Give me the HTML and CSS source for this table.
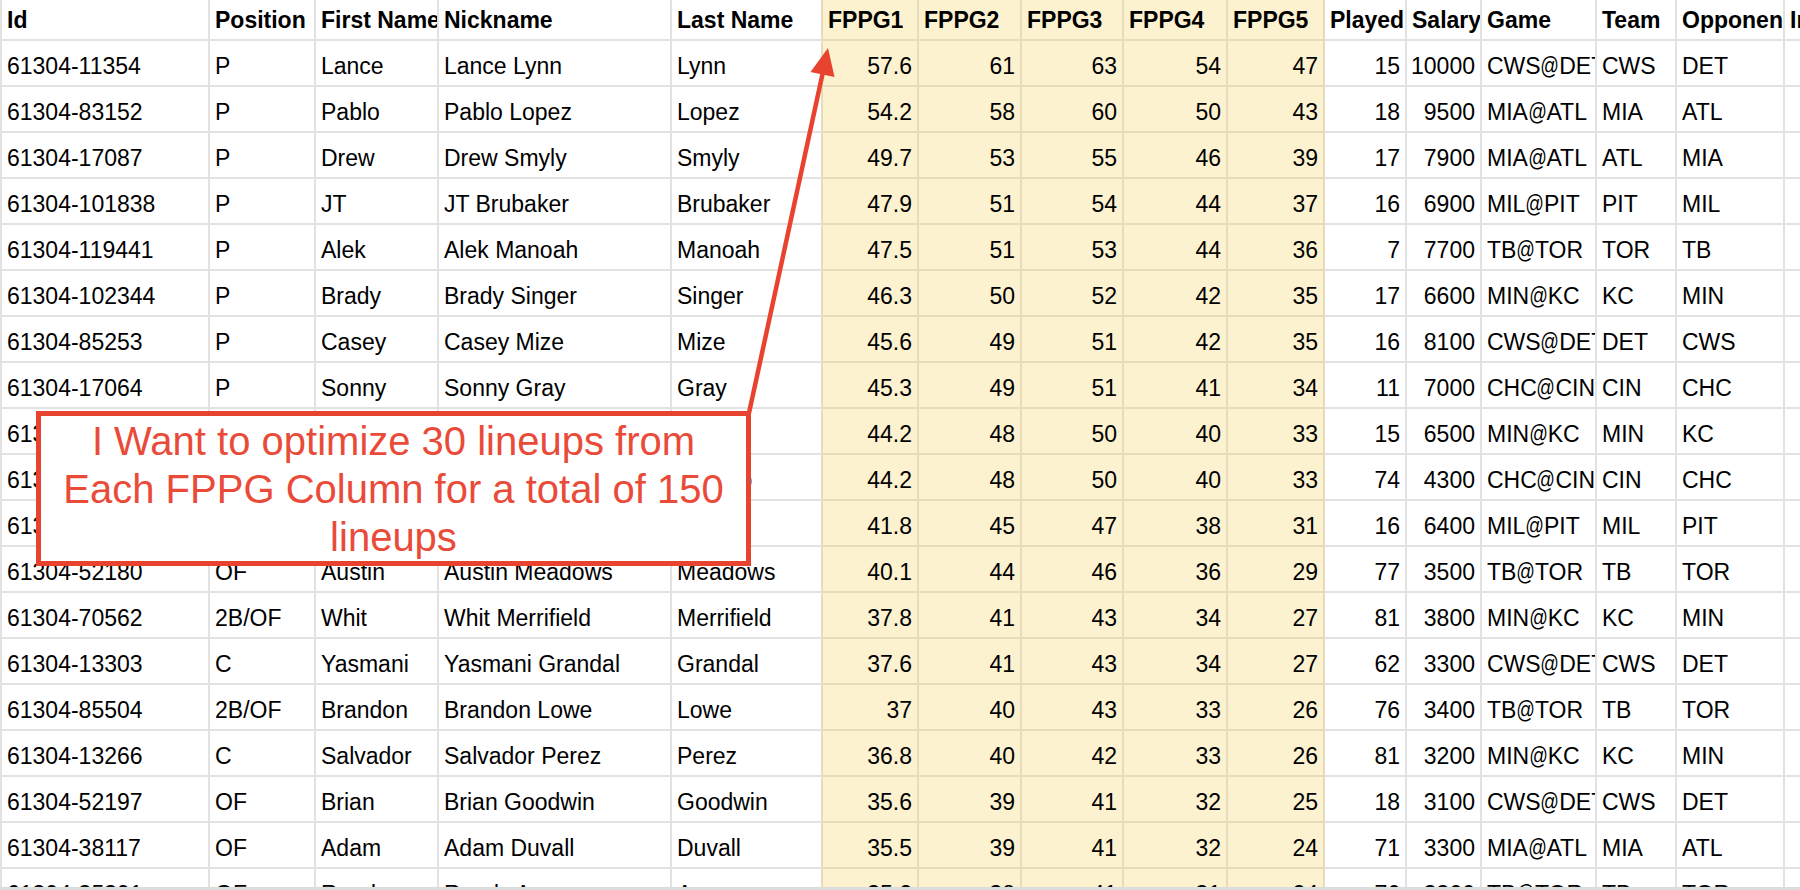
FILE: index.html
```html
<!DOCTYPE html>
<html lang="en">
<head>
<meta charset="utf-8">
<title>Sheet</title>
<link rel="stylesheet" href="styles.css">
</head>
<body>
<div class="page">
  <div class="sheet" id="sheet">
    <div class="c h">Id</div><div class="c h">Position</div><div class="c h">First Name</div><div class="c h">Nickname</div><div class="c h pre">Last Name</div><div class="c h y">FPPG1</div><div class="c h y">FPPG2</div><div class="c h y">FPPG3</div><div class="c h y">FPPG4</div><div class="c h y">FPPG5</div><div class="c h">Played</div><div class="c h">Salary</div><div class="c h">Game</div><div class="c h">Team</div><div class="c h">Opponent</div><div class="c h">Injury Indicator</div>

    <div class="c">61304-11354</div><div class="c">P</div><div class="c">Lance</div><div class="c">Lance Lynn</div><div class="c pre">Lynn</div><div class="c y n">57.6</div><div class="c y n">61</div><div class="c y n">63</div><div class="c y n">54</div><div class="c y n">47</div><div class="c n">15</div><div class="c n">10000</div><div class="c">CWS<span class="at">@</span>DET</div><div class="c">CWS</div><div class="c">DET</div><div class="c"></div>

    <div class="c">61304-83152</div><div class="c">P</div><div class="c">Pablo</div><div class="c">Pablo Lopez</div><div class="c pre">Lopez</div><div class="c y n">54.2</div><div class="c y n">58</div><div class="c y n">60</div><div class="c y n">50</div><div class="c y n">43</div><div class="c n">18</div><div class="c n">9500</div><div class="c">MIA<span class="at">@</span>ATL</div><div class="c">MIA</div><div class="c">ATL</div><div class="c"></div>

    <div class="c">61304-17087</div><div class="c">P</div><div class="c">Drew</div><div class="c">Drew Smyly</div><div class="c pre">Smyly</div><div class="c y n">49.7</div><div class="c y n">53</div><div class="c y n">55</div><div class="c y n">46</div><div class="c y n">39</div><div class="c n">17</div><div class="c n">7900</div><div class="c">MIA<span class="at">@</span>ATL</div><div class="c">ATL</div><div class="c">MIA</div><div class="c"></div>

    <div class="c">61304-101838</div><div class="c">P</div><div class="c">JT</div><div class="c">JT Brubaker</div><div class="c pre">Brubaker</div><div class="c y n">47.9</div><div class="c y n">51</div><div class="c y n">54</div><div class="c y n">44</div><div class="c y n">37</div><div class="c n">16</div><div class="c n">6900</div><div class="c">MIL<span class="at">@</span>PIT</div><div class="c">PIT</div><div class="c">MIL</div><div class="c"></div>

    <div class="c">61304-119441</div><div class="c">P</div><div class="c">Alek</div><div class="c">Alek Manoah</div><div class="c pre">Manoah</div><div class="c y n">47.5</div><div class="c y n">51</div><div class="c y n">53</div><div class="c y n">44</div><div class="c y n">36</div><div class="c n">7</div><div class="c n">7700</div><div class="c">TB<span class="at">@</span>TOR</div><div class="c">TOR</div><div class="c">TB</div><div class="c"></div>

    <div class="c">61304-102344</div><div class="c">P</div><div class="c">Brady</div><div class="c">Brady Singer</div><div class="c pre">Singer</div><div class="c y n">46.3</div><div class="c y n">50</div><div class="c y n">52</div><div class="c y n">42</div><div class="c y n">35</div><div class="c n">17</div><div class="c n">6600</div><div class="c">MIN<span class="at">@</span>KC</div><div class="c">KC</div><div class="c">MIN</div><div class="c"></div>

    <div class="c">61304-85253</div><div class="c">P</div><div class="c">Casey</div><div class="c">Casey Mize</div><div class="c pre">Mize</div><div class="c y n">45.6</div><div class="c y n">49</div><div class="c y n">51</div><div class="c y n">42</div><div class="c y n">35</div><div class="c n">16</div><div class="c n">8100</div><div class="c">CWS<span class="at">@</span>DET</div><div class="c">DET</div><div class="c">CWS</div><div class="c"></div>

    <div class="c">61304-17064</div><div class="c">P</div><div class="c">Sonny</div><div class="c">Sonny Gray</div><div class="c pre">Gray</div><div class="c y n">45.3</div><div class="c y n">49</div><div class="c y n">51</div><div class="c y n">41</div><div class="c y n">34</div><div class="c n">11</div><div class="c n">7000</div><div class="c">CHC<span class="at">@</span>CIN</div><div class="c">CIN</div><div class="c">CHC</div><div class="c"></div>

    <div class="c">61304-14417</div><div class="c">P</div><div class="c">Joe</div><div class="c">Joe Ryan</div><div class="c pre">Ryan</div><div class="c y n">44.2</div><div class="c y n">48</div><div class="c y n">50</div><div class="c y n">40</div><div class="c y n">33</div><div class="c n">15</div><div class="c n">6500</div><div class="c">MIN<span class="at">@</span>KC</div><div class="c">MIN</div><div class="c">KC</div><div class="c"></div>

    <div class="c">61304-17101</div><div class="c">P</div><div class="c">Luis</div><div class="c">Luis Castillo</div><div class="c pre">Castillo</div><div class="c y n">44.2</div><div class="c y n">48</div><div class="c y n">50</div><div class="c y n">40</div><div class="c y n">33</div><div class="c n">74</div><div class="c n">4300</div><div class="c">CHC<span class="at">@</span>CIN</div><div class="c">CIN</div><div class="c">CHC</div><div class="c"></div>

    <div class="c">61304-38188</div><div class="c">P</div><div class="c">Freddy</div><div class="c">Freddy Peralta</div><div class="c pre">Peralta</div><div class="c y n">41.8</div><div class="c y n">45</div><div class="c y n">47</div><div class="c y n">38</div><div class="c y n">31</div><div class="c n">16</div><div class="c n">6400</div><div class="c">MIL<span class="at">@</span>PIT</div><div class="c">MIL</div><div class="c">PIT</div><div class="c"></div>

    <div class="c">61304-52180</div><div class="c">OF</div><div class="c">Austin</div><div class="c">Austin Meadows</div><div class="c pre">Meadows</div><div class="c y n">40.1</div><div class="c y n">44</div><div class="c y n">46</div><div class="c y n">36</div><div class="c y n">29</div><div class="c n">77</div><div class="c n">3500</div><div class="c">TB<span class="at">@</span>TOR</div><div class="c">TB</div><div class="c">TOR</div><div class="c"></div>

    <div class="c">61304-70562</div><div class="c">2B/OF</div><div class="c">Whit</div><div class="c">Whit Merrifield</div><div class="c pre">Merrifield</div><div class="c y n">37.8</div><div class="c y n">41</div><div class="c y n">43</div><div class="c y n">34</div><div class="c y n">27</div><div class="c n">81</div><div class="c n">3800</div><div class="c">MIN<span class="at">@</span>KC</div><div class="c">KC</div><div class="c">MIN</div><div class="c"></div>

    <div class="c">61304-13303</div><div class="c">C</div><div class="c">Yasmani</div><div class="c">Yasmani Grandal</div><div class="c pre">Grandal</div><div class="c y n">37.6</div><div class="c y n">41</div><div class="c y n">43</div><div class="c y n">34</div><div class="c y n">27</div><div class="c n">62</div><div class="c n">3300</div><div class="c">CWS<span class="at">@</span>DET</div><div class="c">CWS</div><div class="c">DET</div><div class="c"></div>

    <div class="c">61304-85504</div><div class="c">2B/OF</div><div class="c">Brandon</div><div class="c">Brandon Lowe</div><div class="c pre">Lowe</div><div class="c y n">37</div><div class="c y n">40</div><div class="c y n">43</div><div class="c y n">33</div><div class="c y n">26</div><div class="c n">76</div><div class="c n">3400</div><div class="c">TB<span class="at">@</span>TOR</div><div class="c">TB</div><div class="c">TOR</div><div class="c"></div>

    <div class="c">61304-13266</div><div class="c">C</div><div class="c">Salvador</div><div class="c">Salvador Perez</div><div class="c pre">Perez</div><div class="c y n">36.8</div><div class="c y n">40</div><div class="c y n">42</div><div class="c y n">33</div><div class="c y n">26</div><div class="c n">81</div><div class="c n">3200</div><div class="c">MIN<span class="at">@</span>KC</div><div class="c">KC</div><div class="c">MIN</div><div class="c"></div>

    <div class="c">61304-52197</div><div class="c">OF</div><div class="c">Brian</div><div class="c">Brian Goodwin</div><div class="c pre">Goodwin</div><div class="c y n">35.6</div><div class="c y n">39</div><div class="c y n">41</div><div class="c y n">32</div><div class="c y n">25</div><div class="c n">18</div><div class="c n">3100</div><div class="c">CWS<span class="at">@</span>DET</div><div class="c">CWS</div><div class="c">DET</div><div class="c"></div>

    <div class="c">61304-38117</div><div class="c">OF</div><div class="c">Adam</div><div class="c">Adam Duvall</div><div class="c pre">Duvall</div><div class="c y n">35.5</div><div class="c y n">39</div><div class="c y n">41</div><div class="c y n">32</div><div class="c y n">24</div><div class="c n">71</div><div class="c n">3300</div><div class="c">MIA<span class="at">@</span>ATL</div><div class="c">MIA</div><div class="c">ATL</div><div class="c"></div>

    <div class="c">61304-35391</div><div class="c">OF</div><div class="c">Randy</div><div class="c">Randy Arozarena</div><div class="c pre">Arozarena</div><div class="c y n">35.2</div><div class="c y n">38</div><div class="c y n">41</div><div class="c y n">31</div><div class="c y n">24</div><div class="c n">76</div><div class="c n">3300</div><div class="c">TB<span class="at">@</span>TOR</div><div class="c">TB</div><div class="c">TOR</div><div class="c"></div>
  </div>

  <svg class="arrow" width="1800" height="890" viewBox="0 0 1800 890" aria-hidden="true">
    <line x1="749" y1="413" x2="822.5" y2="74" stroke="#e8432f" stroke-width="4.5"/>
    <polygon points="828,48 834.5,77 810.5,72" fill="#e8432f"/>
  </svg>

  <div class="callout"><p class="callout-text">I Want to optimize 30 lineups from<br>Each FPPG Column for a total of 150<br>lineups</p></div>

  <div class="bottom-bar"></div>
</div>
</body>
</html>
```

FILE: styles.css
```css
* { box-sizing: border-box; }

html, body {
  margin: 0;
  padding: 0;
  background: #ffffff;
}

body {
  width: 1800px;
  height: 890px;
  overflow: hidden;
  font-family: "Liberation Sans", Arial, sans-serif;
  color: #000;
}

.page {
  position: relative;
  width: 1800px;
  height: 890px;
  overflow: hidden;
}

.sheet {
  display: grid;
  grid-template-columns: 208px 106px 123px 233px 151px 96px 103px 102px 104px 97px 82px 75px 115px 80px 108px 120px;
  grid-template-rows: 41px;
  grid-auto-rows: 46px;
  border-left: 2px solid #e2e2e2;
  width: max-content;
}

.c {
  display: flex;
  align-items: flex-end;
  padding: 0 5px 7px 5px;
  font-size: 23px;
  line-height: 23px;
  white-space: nowrap;
  overflow: hidden;
  border-right: 2px solid #e2e2e2;
  border-bottom: 2px solid #e2e2e2;
  background: #ffffff;
}

.h {
  font-weight: bold;
}

.n {
  justify-content: flex-end;
}

.y {
  background: #fcf2d0;
  border-right-color: #e6dcbc;
  border-bottom-color: #e6dcbc;
}

.pre {
  border-right-color: #e6dcbc;
}

.at {
  display: inline-block;
  transform: scaleX(0.8);
  margin: 0 -2.4px;
}

.arrow {
  position: absolute;
  left: 0;
  top: 0;
  pointer-events: none;
}

.callout {
  position: absolute;
  left: 36px;
  top: 411px;
  width: 715px;
  height: 155px;
  border: 5px solid #e8432f;
  background: #ffffff;
  display: flex;
  align-items: center;
  justify-content: center;
  padding: 0 8px;
}

.callout-text {
  margin: 0;
  color: #ea4b39;
  font-family: "Liberation Sans", Arial, sans-serif;
  font-size: 40px;
  line-height: 48px;
  text-align: center;
  white-space: nowrap;
}

.bottom-bar {
  position: absolute;
  left: 0;
  bottom: 0;
  width: 1800px;
  height: 3px;
  background: #dcdcdc;
}
```
